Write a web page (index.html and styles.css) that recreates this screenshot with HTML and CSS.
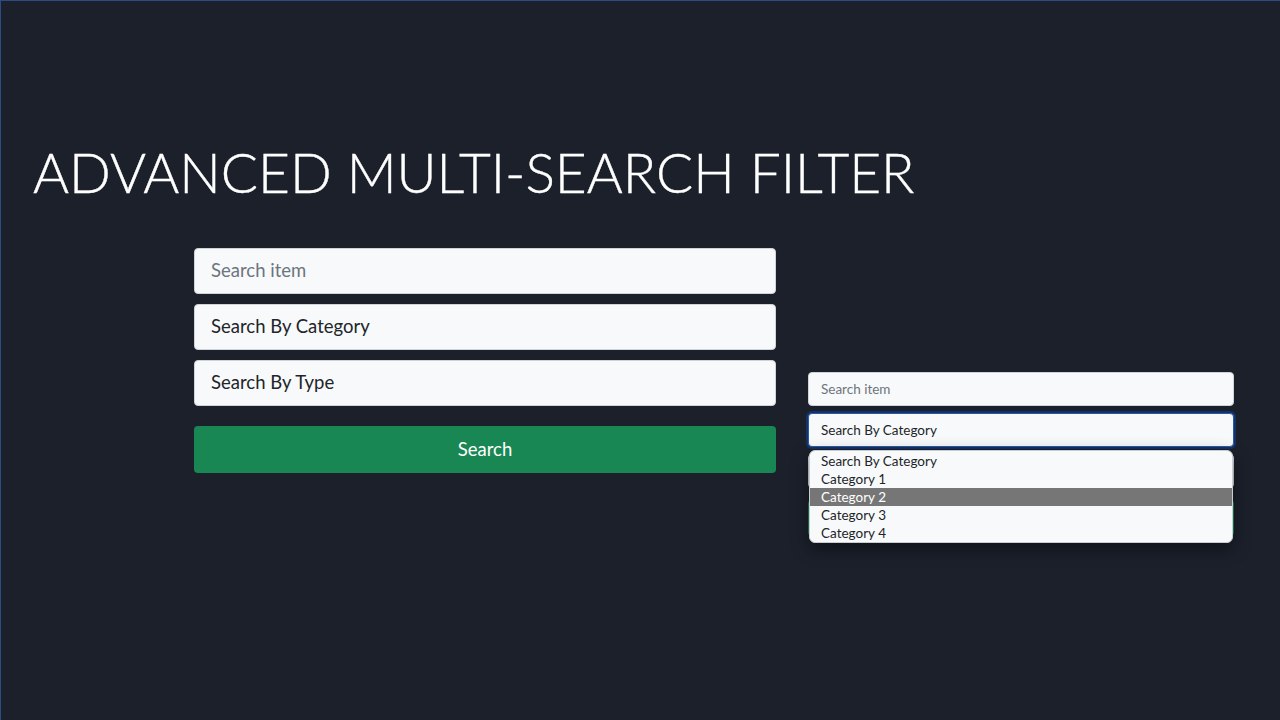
FILE: index.html
```html
<!DOCTYPE html>
<html lang="en">
<head>
<meta charset="utf-8">
<title>Advanced Multi-Search Filter</title>
<link rel="stylesheet" href="styles.css">
</head>
<body>
<div class="page">
  <h1 class="title">ADVANCED MULTI-SEARCH FILTER</h1>
  <div class="forms">
    <form class="filter filter-lg">
      <div class="field placeholder">Search item</div>
      <div class="field">Search By Category</div>
      <div class="field">Search By Type</div>
      <div class="btn">Search</div>
    </form>
    <form class="filter filter-sm">
      <div class="field placeholder">Search item</div>
      <div class="select-wrap">
        <div class="field focused">Search By Category</div>
        <ul class="dropdown">
          <li>Search By Category</li>
          <li>Category 1</li>
          <li class="active">Category 2</li>
          <li>Category 3</li>
          <li>Category 4</li>
        </ul>
      </div>
      <div class="field" aria-hidden="true"></div>
      <div class="btn" aria-hidden="true"></div>
    </form>
  </div>
</div>
</body>
</html>
```

FILE: styles.css
```css
html, body {
  margin: 0;
  padding: 0;
  height: 100%;
}
body {
  background: #1b202b;
  font-family: "Lato", "Open Sans", sans-serif;
  color: #212529;
}
.page {
  box-sizing: border-box;
  height: 720px;
  border-top: 1px solid #2c4a85;
  border-left: 1px solid #2c4a85;
  overflow: hidden;
}
.title {
  margin: 138px 0 0 32px;
  font-size: 55px;
  font-weight: 300;
  line-height: 66px;
  color: #ffffff;
  -webkit-text-stroke: 0.4px #ffffff;
}
.forms {
  display: flex;
  align-items: flex-start;
  gap: 32px;
  padding-left: 193px;
  margin-top: 43px;
}
.filter {
  display: flex;
  flex-direction: column;
  margin: 0;
}
.filter-lg {
  width: 582px;
  gap: 10px;
}
.filter-sm {
  width: 426px;
  gap: 7px;
  margin-top: 124px;
}
.field {
  box-sizing: border-box;
  background: #f8f9fa;
  border: 1px solid #ced4da;
  border-radius: 4px;
  color: #212529;
  display: flex;
  align-items: center;
}
.filter-lg .field {
  height: 46px;
  padding: 0 0 3px 16px;
  font-size: 18.5px;
}
.filter-sm .field {
  height: 34px;
  padding: 0 0 1px 12px;
  font-size: 13.5px;
}
.field.placeholder {
  color: #6c757d;
}
.field.focused {
  border: 1px solid #2c5aa0;
  box-shadow: 0 0 0 2px rgba(16, 58, 130, 0.75);
}
.btn {
  box-sizing: border-box;
  background: #198754;
  color: #ffffff;
  border-radius: 4px;
  display: flex;
  align-items: center;
  justify-content: center;
}
.filter-lg .btn {
  height: 47px;
  margin-top: 10px;
  padding-bottom: 2px;
  font-size: 18.5px;
}
.filter-sm .btn {
  height: 36px;
  margin-top: 5px;
  font-size: 13.5px;
}
.select-wrap {
  position: relative;
}
.dropdown {
  position: absolute;
  top: 37px;
  left: 1px;
  right: 1px;
  margin: 0;
  padding: 1px 0 0;
  list-style: none;
  background: #f8f9fa;
  border: 1px solid #c9cdd2;
  border-radius: 6px;
  overflow: hidden;
  box-shadow: 0 6px 18px rgba(0, 0, 0, 0.45);
  z-index: 2;
}
.dropdown li {
  height: 18px;
  line-height: 18px;
  padding-left: 11px;
  font-size: 13.5px;
  color: #212529;
}
.dropdown li.active {
  background: #767676;
  color: #ffffff;
}
```
